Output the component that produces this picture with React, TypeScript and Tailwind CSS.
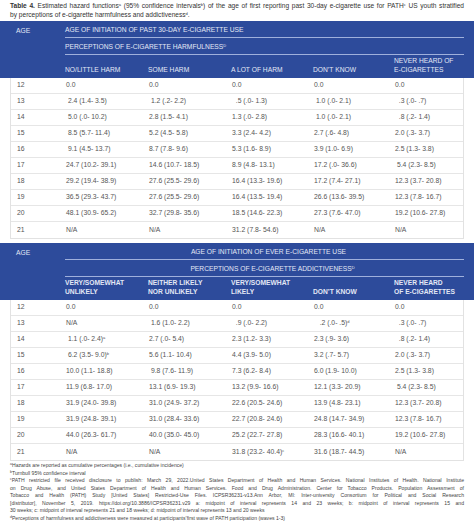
const S = '\u00a0'

const harmRows: string[][] = [
  ['12', '0.0', '0.0', '0.0', '0.0', '0.0'],
  ['13', S + '2.4 (1.4- 3.5)', S + '1.2 (.2- 2.2)', S + S + '.5 (.0- 1.3)', S + '1.0 (.0- 2.1)', S + S + '.3 (.0- .7)'],
  ['14', S + '5.0 (.0- 10.2)', '2.8 (1.5- 4.1)', '1.3 (.0- 2.8)', S + '1.0 (.0- 2.1)', S + S + '.8 (.2- 1.4)'],
  ['15', S + '8.5 (5.7- 11.4)', '5.2 (4.5- 5.8)', '3.3 (2.4- 4.2)', '2.7 (.6- 4.8)', '2.0 (.3- 3.7)'],
  ['16', S + '9.1 (4.5- 13.7)', '8.7 (7.8- 9.6)', '5.3 (1.6- 8.9)', '3.9 (1.0- 6.9)', '2.5 (1.3- 3.8)'],
  ['17', '24.7 (10.2- 39.1)', '14.6 (10.7- 18.5)', '8.9 (4.8- 13.1)', '17.2 (.0- 36.6)', S + '5.4 (2.3- 8.5)'],
  ['18', '29.2 (19.4- 38.9)', '27.6 (25.5- 29.6)', '16.4 (13.3- 19.6)', '17.2 (7.4- 27.1)', '12.3 (3.7- 20.8)'],
  ['19', '36.5 (29.3- 43.7)', '27.6 (25.5- 29.6)', '16.4 (13.5- 19.4)', '26.6 (13.6- 39.5)', '12.3 (7.8- 16.7)'],
  ['20', '48.1 (30.9- 65.2)', '32.7 (29.8- 35.6)', '18.5 (14.6- 22.3)', '27.3 (7.6- 47.0)', '19.2 (10.6- 27.8)'],
  ['21', 'N/A', 'N/A', '31.2 (7.8- 54.6)', 'N/A', 'N/A'],
]

// [text, superscript]
type Cell = string | [string, string]

const addictRows: Cell[][] = [
  ['12', '0.0', '0.0', '0.0', '0.0', '0.0'],
  ['13', 'N/A', S + '1.6 (1.0- 2.2)', S + S + '.9 (.0- 2.2)', [S + S + S + '.2 (.0- .5)', 'd'], S + S + '.3 (.0- .7)'],
  ['14', [S + '1.1 (.0- 2.4)', 'a'], '2.7 (.0- 5.4)', '2.3 (1.2- 3.3)', '2.3 (.9- 3.6)', S + S + '.8 (.2- 1.4)'],
  ['15', [S + '6.2 (3.5- 9.0)', 'b'], '5.6 (1.1- 10.4)', '4.4 (3.9- 5.0)', '3.2 (.7- 5.7)', '2.0 (.3- 3.7)'],
  ['16', '10.0 (1.1- 18.8)', S + '9.8 (7.6- 11.9)', '7.3 (6.2- 8.4)', '6.0 (1.9- 10.0)', '2.5 (1.3- 3.8)'],
  ['17', '11.9 (6.8- 17.0)', '13.1 (6.9- 19.3)', '13.2 (9.9- 16.6)', '12.1 (3.3- 20.9)', S + '5.4 (2.3- 8.5)'],
  ['18', '31.9 (24.0- 39.8)', '31.0 (24.9- 37.2)', '22.6 (20.5- 24.6)', '13.9 (4.8- 23.1)', '12.3 (3.7- 20.8)'],
  ['19', '31.9 (24.8- 39.1)', '31.0 (28.4- 33.6)', '22.7 (20.8- 24.6)', '24.8 (14.7- 34.9)', '12.3 (7.8- 16.7)'],
  ['20', '44.0 (26.3- 61.7)', '40.0 (35.0- 45.0)', '25.2 (22.7- 27.8)', '28.3 (16.6- 40.1)', '19.2 (10.6- 27.8)'],
  ['21', 'N/A', 'N/A', ['31.8 (23.2- 40.4)', 'c'], '31.6 (18.7- 44.5)', 'N/A'],
]

const harmCols = [['NO/LITTLE HARM'], ['SOME HARM'], ['A LOT OF HARM'], ['DON\u2019T KNOW'], ['NEVER HEARD OF', 'E-CIGARETTES']]
const addictCols = [
  ['VERY/SOMEWHAT', 'UNLIKELY'],
  ['NEITHER LIKELY', 'NOR UNLIKELY'],
  ['VERY/SOMEWHAT', 'LIKELY'],
  ['DON\u2019T KNOW'],
  ['NEVER HEARD', 'OF E-CIGARETTES'],
]

const font = { fontFamily: '"Liberation Sans", Arial, sans-serif' }

// each line is justified to full width; the last line of a paragraph is left as is
const just = 'whitespace-nowrap text-justify [text-align-last:justify]'

function Header({ title, sub, cols, centered, bold }: {
  title: string; sub: string; cols: string[][]; centered?: boolean; bold?: boolean
}) {
  return (
    <div className="flex h-[57px] bg-[#2d4b9b] px-[10px] text-[6.7px] leading-[9px] text-[#e3e8f5]">
      <div className="w-[55px] pl-[6px] pt-[5px]">AGE</div>
      <div className="flex flex-1 flex-col">
        <div className={`flex h-[17px] items-center border-b border-[#9fb0dc] ${centered ? 'justify-center pl-[8px]' : ''}`}>
          {title}
        </div>
        <div className={`flex h-[17px] items-center border-b border-[#9fb0dc] ${centered ? 'justify-center pl-[16px]' : ''}`}>
          <span>
            {sub}
            <sup className="text-[4px]">D</sup>
          </span>
        </div>
        <div className={`grid flex-1 grid-cols-[83px_83px_82px_81px_1fr] items-end pb-[4px] ${bold ? 'font-bold' : ''}`}>
          {cols.map((c, i) => (
            <div key={i}>
              {c.map((l) => (
                <div key={l} className="whitespace-nowrap">{l}</div>
              ))}
            </div>
          ))}
        </div>
      </div>
    </div>
  )
}

function Body({ rows }: { rows: Cell[][] }) {
  return (
    <div className="mx-[10px] border border-t-0 border-[#e2e2e2] bg-white text-[6.8px] text-[#555]">
      {rows.map((r, i) => (
        <div
          key={i}
          className={`grid h-[16px] grid-cols-[55px_83px_83px_82px_81px_1fr] items-center ${i < rows.length - 1 ? 'border-b border-[#e6e6e6]' : ''}`}
        >
          {r.map((c, j) => (
            <div key={j} className={`whitespace-pre ${j === 0 ? 'pl-[6px]' : ''}`}>
              {typeof c === 'string' ? c : (
                <>
                  {c[0]}
                  <sup className="text-[4px]">{c[1]}</sup>
                </>
              )}
            </div>
          ))}
        </div>
      ))}
    </div>
  )
}

export default function App() {
  return (
    <div className="h-[522px] w-[474px] overflow-hidden bg-white" style={font}>
      {/* caption */}
      <div className="h-[21px] px-[10px] pt-[1px] text-[6.6px] leading-[9px] text-[#333]">
        <div className={just}>
          <span className="font-bold">Table 4.</span> Estimated hazard functions<sup className="text-[4px]">a</sup> (95% confidence
          intervals<sup className="text-[4px]">b</sup>) of the age of first reporting past 30-day e-cigarette use for PATH
          <sup className="text-[4px]">c</sup> US youth stratified
        </div>
        <div>
          by perceptions of e-cigarette harmfulness and addictiveness<sup className="text-[4px]">d</sup>.
        </div>
      </div>

      <Header
        title="AGE OF INITIATION OF PAST 30-DAY E-CIGARETTE USE"
        sub="PERCEPTIONS OF E-CIGARETTE HARMFULNESS"
        cols={harmCols}
      />
      <Body rows={harmRows} />

      <div className="h-[4px]" />

      <Header
        title="AGE OF INITIATION OF EVER E-CIGARETTE USE"
        sub="PERCEPTIONS OF E-CIGARETTE ADDICTIVENESS"
        cols={addictCols}
        centered
        bold
      />
      <Body rows={addictRows} />

      {/* footnotes */}
      <div className="px-[10px] pt-[1px] text-[5.1px] leading-[7.5px] text-[#444]">
        <div><sup className="text-[3.5px]">a</sup>Hazards are reported as cumulative percentages (i.e., cumulative incidence)</div>
        <div><sup className="text-[3.5px]">b</sup>Turnbull 95% confidence interval</div>
        <div className={just}>
          <sup className="text-[3.5px]">c</sup>PATH restricted file received disclosure to publish: March 29, 2022.United States
          Department of Health and Human Services. National Institutes of Health. National Institute
        </div>
        <div className={just}>
          on Drug Abuse, and United States Department of Health and Human Services. Food and Drug Administration. Center for
          Tobacco Products. Population Assessment of
        </div>
        <div className={just}>
          Tobacco and Health (PATH) Study [United States] Restricted-Use Files. ICPSR36231-v13.Ann Arbor, MI:
          Inter-university Consortium for Political and Social Research
        </div>
        <div className={just}>
          [distributor], November 5, 2019. https://doi.org/10.3886/ICPSR36231.v29 a: midpoint of interval represents 14 and 23
          weeks; b: midpoint of interval represents 15 and
        </div>
        <div>
          30 weeks; c: midpoint of interval represents 21 and 18 weeks; d: midpoint of interval represents 13 and 20 weeks
        </div>
        <div>
          <sup className="text-[3.5px]">d</sup>Perceptions of harmfulness and addictiveness were measured at participants{'\u2019'}
          first wave of PATH participation (waves 1-3)
        </div>
      </div>
    </div>
  )
}
